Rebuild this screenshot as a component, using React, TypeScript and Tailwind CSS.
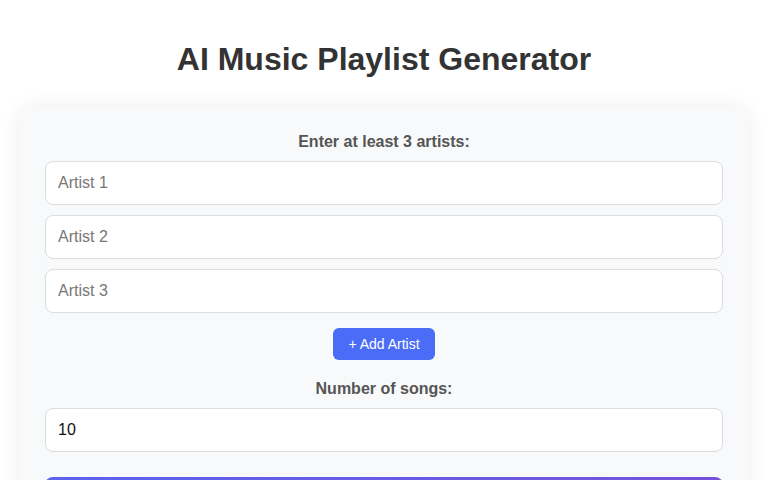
import React, { useState } from "react";

export default function App() {
  const [artists, setArtists] = useState(["", "", ""]);
  const [count, setCount] = useState("10");
  return (
    <div className="min-h-screen bg-white p-5 font-['Liberation_Sans',Arial,sans-serif]">
      <h1 className="mt-[21px] mb-[30px] text-center text-[32px] font-bold leading-[37px] text-[#333]">
        AI Music Playlist Generator
      </h1>
      <div className="rounded-[10px] bg-[#f8f9fa] p-[25px] shadow-[0_0_20px_rgba(0,0,0,0.08)]">
        <label className="mb-[10px] block text-center text-[16px] font-bold leading-[18px] text-[#555]">
          Enter at least 3 artists:
        </label>
        <div className="flex flex-col gap-[10px]">
          {artists.map((a, i) => (
            <input
              key={i}
              value={a}
              onChange={(e) => {
                const n = [...artists];
                n[i] = e.target.value;
                setArtists(n);
              }}
              placeholder={`Artist ${i + 1}`}
              className="h-[44px] w-full rounded-[8px] border border-[#ddd] bg-white px-3 text-[16px] text-[#222] placeholder:text-[#777] outline-none"
            />
          ))}
        </div>
        <div className="mt-[15px] flex justify-center">
          <button
            onClick={() => setArtists([...artists, ""])}
            className="h-[32px] rounded-[6px] bg-[#4a6cf7] px-[15px] text-[14px] text-white"
          >
            + Add Artist
          </button>
        </div>
        <label className="mt-[20px] mb-[10px] block text-center text-[16px] font-bold leading-[18px] text-[#555]">
          Number of songs:
        </label>
        <input
          value={count}
          onChange={(e) => setCount(e.target.value)}
          className="h-[44px] w-full rounded-[8px] border border-[#ddd] bg-white px-3 text-[16px] text-[#111] outline-none"
        />
        <button className="mt-[25px] h-[48px] w-full rounded-[8px] bg-gradient-to-r from-[#5b63f0] to-[#7452d8] text-[18px] font-bold text-white">
          Generate Playlist
        </button>
      </div>
    </div>
  );
}
